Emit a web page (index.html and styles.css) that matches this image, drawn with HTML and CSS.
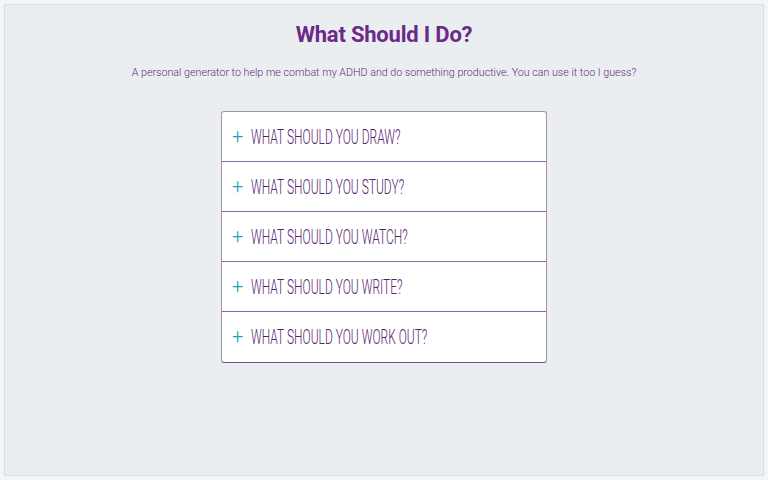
FILE: index.html
```html
<!DOCTYPE html>
<html lang="en">
<head>
    <meta charset="UTF-8">
    <meta name="viewport" content="width=device-width, initial-scale=1.0">
    <title>What Should I Do?</title>
    <link rel="stylesheet" href="styles.css">
</head>
<body>
    <div class="page">
        <h1>What Should I Do?</h1>
        <p class="intro">A personal generator to help me combat my ADHD and do something productive. You can use it too I guess?</p>

        <div class="accordion">
            <div class="item"><span class="plus">+</span><span class="label">What should you draw?</span></div>
            <div class="item"><span class="plus">+</span><span class="label">What should you study?</span></div>
            <div class="item"><span class="plus">+</span><span class="label">What should you watch?</span></div>
            <div class="item"><span class="plus">+</span><span class="label">What should you write?</span></div>
            <div class="item"><span class="plus">+</span><span class="label">What should you work out?</span></div>
        </div>
    </div>
</body>
</html>
```

FILE: styles.css
```css
* {
    margin: 0;
    padding: 0;
    box-sizing: border-box;
}
body {
    font-family: Roboto, 'Liberation Sans', sans-serif;
    background: #f5f5f5;
    padding: 4px;
    height: 480px;
}
.page {
    height: 472px;
    background: #ebeef1;
    border: 1px solid #dcdfe3;
    padding-top: 18px;
    display: flex;
    flex-direction: column;
    align-items: center;
}
h1 {
    color: #6a2a86;
    font-size: 22px;
    font-weight: 700;
    letter-spacing: -0.2px;
    line-height: 24px;
}
.intro {
    color: #5e2d7a;
    font-size: 10.7px;
    font-weight: 300;
    margin-top: 19px;
    line-height: 14px;
}
.accordion {
    width: 326px;
    margin-top: 31px;
    background: white;
    border: 1px solid #a58fb3;
    border-bottom-color: #6e4b86;
    border-radius: 3px;
}
.item {
    height: 50px;
    display: flex;
    align-items: center;
    padding-left: 10px;
    border-bottom: 1px solid #8a6a9e;
    color: #55246f;
    text-transform: uppercase;
}
.item:last-child {
    border-bottom: none;
}
.plus {
    color: #1aa3b3;
    font-weight: 300;
    font-size: 20px;
    width: 19px;
    margin-top: -2px;
}
.label {
    display: inline-block;
    font-weight: 300;
    font-size: 20px;
    transform: scaleX(0.6);
    transform-origin: left center;
    white-space: nowrap;
}
```
